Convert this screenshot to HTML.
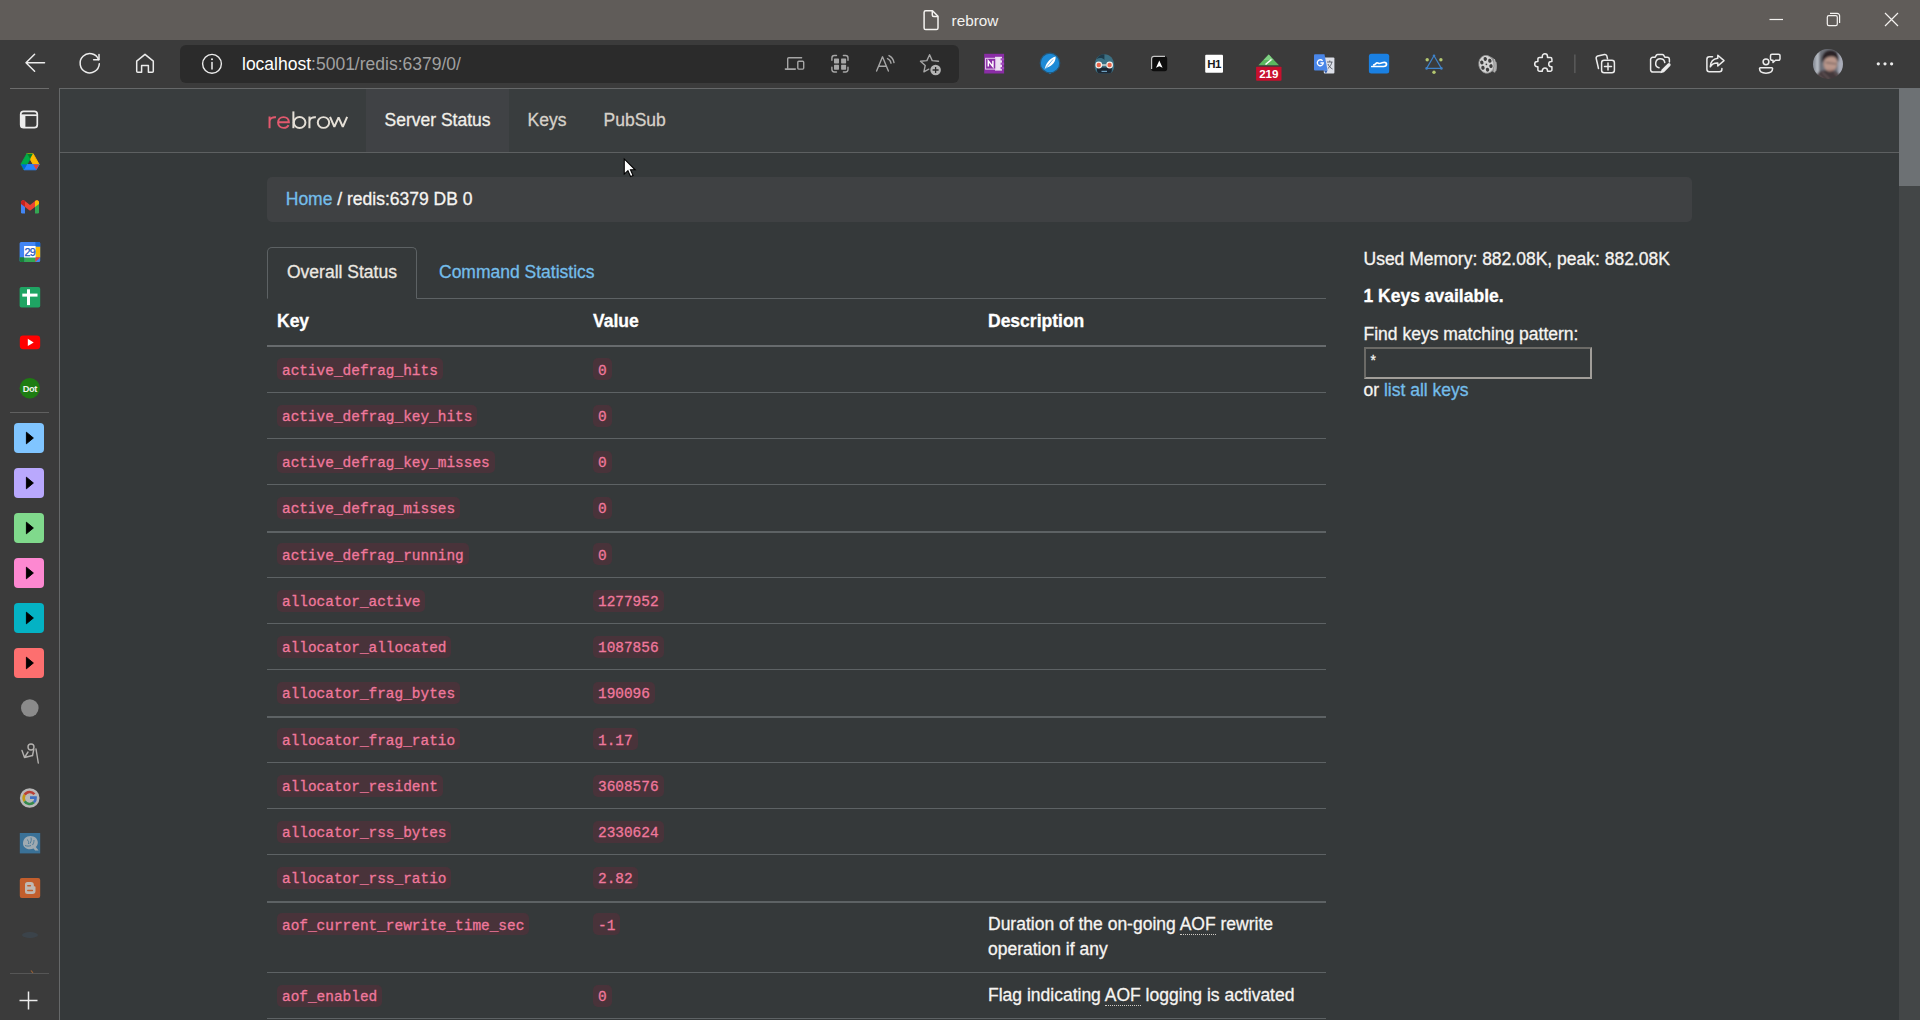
<!DOCTYPE html>
<html>
<head>
<meta charset="utf-8">
<title>rebrow</title>
<style>
*{box-sizing:border-box;margin:0;padding:0}
html,body{width:1920px;height:1020px;overflow:hidden;background:#3b3b3b;font-family:"Liberation Sans",sans-serif;}
.abs{position:absolute}
/* ---------- browser chrome ---------- */
#titlebar{position:absolute;left:0;top:0;width:1920px;height:40px;background:#605c59}
#titlebar .ttl{position:absolute;left:951.600px;top:11px;font-size:15.300px;line-height:20px;color:#f4f2f0}
#toolbar{position:absolute;left:0;top:40px;width:1920px;height:48px;background:#3b3b3b}
#addr{position:absolute;left:180px;top:5px;width:779px;height:38px;border-radius:6px;background:#2b2b2b}
#addr .url{position:absolute;left:62px;top:7.500px;font-size:17.5px;line-height:22px;color:#a0a0a0;white-space:nowrap}
#addr .url b{font-weight:normal;color:#ffffff}
#topline{position:absolute;left:59px;top:88px;width:1840px;height:1px;background:#666869}
#sideline{position:absolute;left:59px;top:88px;width:1px;height:932px;background:#666869}
#sidebar{position:absolute;left:0;top:88px;width:59px;height:932px;background:#3b3b3b}
.sbsep{position:absolute;left:10px;width:39px;height:1px;background:#5e5e5e}
/* ---------- scrollbar ---------- */
#sbtrack{position:absolute;left:1899px;top:89px;width:21px;height:931px;background:#434647}
#sbthumb{position:absolute;left:1899px;top:88px;width:21px;height:98px;background:#6d7174}
/* ---------- page ---------- */
#page{position:absolute;left:60px;top:89px;width:1839px;height:931px;background:#35393a;overflow:hidden;color:#f6f4f1;font-size:17.5px;line-height:25px;-webkit-text-stroke:0.3px}
#nav{position:absolute;left:0;top:0;width:1839px;height:64px;background:#393d3e;border-bottom:1px solid #5d6061}
#nav .act{position:absolute;left:306px;top:0;width:143px;height:63px;background:#404245}
#nav .it{position:absolute;top:19px;font-size:17.5px;line-height:25px;color:#d6d1c9;white-space:nowrap}
#bc{position:absolute;left:207px;top:88.4px;width:1425px;height:45px;border-radius:5px;background:#3f4143;padding:10px 18.75px;white-space:nowrap}
a,.lnk{color:#74bdea;text-decoration:none}
#tabs{position:absolute;left:207px;top:158px;width:1059px;height:52px;border-bottom:1px solid #5d6264}
#tabs .t1{position:absolute;left:0;top:0;width:150px;height:52px;border:1px solid #5d6264;border-bottom:1px solid #35393a;border-radius:5px 5px 0 0;padding:12px 0 0 19px;color:#ece8e1}
#tabs .t2{position:absolute;left:172px;top:13px;}
#tbl{position:absolute;left:207px;top:210.900px;width:1059px}
.hd{position:relative;height:47px;border-bottom:2px solid #676b6d;font-weight:bold;color:#fff}
.hd span{position:absolute;top:9px}
.r{position:relative;height:46.25px;border-top:1px solid #5d6264}
.r.first{border-top:0;height:45px}
.r.first .k,.r.first .v{top:10.600px}
.r.thick{border-top-width:2px;height:46.25px}
.r.thick .k,.r.thick .v{top:9.750px}
.r.thick .d{top:9.400px}
.r.tall{height:71.25px !important}
.k,.v,.d{position:absolute;top:10.750px;white-space:nowrap}
.k{left:10px}.v{left:326px}.d{left:721px;white-space:normal;width:330px;top:10.400px}
code{font-family:"Liberation Mono",monospace;font-size:14.43px;line-height:20px;height:22px;display:inline-block;padding:2.450px 5px 0 5px;margin-top:0.900px;border-radius:5px;background:#49333a;color:#f0789c;vertical-align:top}
abbr{text-decoration:none;border-bottom:1px dotted #cfcbc5}
#side{position:absolute;left:1303.5px;top:0;width:330px;white-space:nowrap}
#side .sl{position:absolute;left:0;height:25px;line-height:25px}
#side .inp{position:absolute;left:0.5px;top:258px;width:228px;height:32px;border:2px solid #a19e99;border-top-color:#6b6a66;border-left-color:#6b6a66;background:#35393a;padding:2px 0 0 4.400px;font-size:13.800px;line-height:19px;color:#f6f4f1}
</style>
</head>
<body>
<!-- PAGE -->
<div id="page">
  <div id="nav">
    <div class="act"></div>
    <svg class="abs" style="left:205px;top:18px" width="95" height="26" viewBox="0 0 90 26" preserveAspectRatio="none" fill="none" stroke-width="1.9" stroke-linecap="butt">
      <g stroke="#e2596e">
        <path d="M4.3 9.6V21.2M4.3 14.2C4.6 11.2 7.2 9.9 10.4 10.3"/>
        <path d="M12.6 15.3H22.6C22.6 11.9 20.4 10.1 17.6 10.1C14.5 10.1 12.4 12.5 12.4 15.5C12.4 18.6 14.6 20.9 17.7 20.9C19.8 20.9 21.5 19.8 22.3 18.1"/>
      </g>
      <g stroke="#e4dfd6">
        <path d="M26.9 4.4V21.2"/>
        <circle cx="32.8" cy="15.5" r="5.5"/>
        <path d="M42.1 9.6V21.2M42.1 14.2C42.4 11.2 45 9.9 48.2 10.3"/>
        <circle cx="55.4" cy="15.5" r="5.4"/>
        <path d="M61.6 9.9L65.7 19.800L69.7 10.4L73.7 19.800L77.8 9.9" stroke-linejoin="bevel"/>
      </g>
    </svg>
    <div class="it" style="left:324.5px;color:#f1efe9">Server Status</div>
    <div class="it" style="left:467.5px">Keys</div>
    <div class="it" style="left:543.5px">PubSub</div>
  </div>
  <div id="bc"><span class="lnk">Home</span> / redis:6379 DB 0</div>
  <div id="tabs"><div class="t1">Overall Status</div><div class="t2 lnk">Command Statistics</div></div>
  <div id="tbl">
    <div class="hd"><span style="left:10px">Key</span><span style="left:326px">Value</span><span style="left:721px">Description</span></div>
    <div class="r first"><div class="k"><code>active_defrag_hits</code></div><div class="v"><code>0</code></div></div>
    <div class="r"><div class="k"><code>active_defrag_key_hits</code></div><div class="v"><code>0</code></div></div>
    <div class="r"><div class="k"><code>active_defrag_key_misses</code></div><div class="v"><code>0</code></div></div>
    <div class="r"><div class="k"><code>active_defrag_misses</code></div><div class="v"><code>0</code></div></div>
    <div class="r thick"><div class="k"><code>active_defrag_running</code></div><div class="v"><code>0</code></div></div>
    <div class="r"><div class="k"><code>allocator_active</code></div><div class="v"><code>1277952</code></div></div>
    <div class="r"><div class="k"><code>allocator_allocated</code></div><div class="v"><code>1087856</code></div></div>
    <div class="r"><div class="k"><code>allocator_frag_bytes</code></div><div class="v"><code>190096</code></div></div>
    <div class="r thick"><div class="k"><code>allocator_frag_ratio</code></div><div class="v"><code>1.17</code></div></div>
    <div class="r"><div class="k"><code>allocator_resident</code></div><div class="v"><code>3608576</code></div></div>
    <div class="r"><div class="k"><code>allocator_rss_bytes</code></div><div class="v"><code>2330624</code></div></div>
    <div class="r"><div class="k"><code>allocator_rss_ratio</code></div><div class="v"><code>2.82</code></div></div>
    <div class="r tall thick"><div class="k"><code>aof_current_rewrite_time_sec</code></div><div class="v"><code>-1</code></div><div class="d">Duration of the on-going <abbr>AOF</abbr> rewrite operation if any</div></div>
    <div class="r"><div class="k"><code>aof_enabled</code></div><div class="v"><code>0</code></div><div class="d">Flag indicating <abbr>AOF</abbr> logging is activated</div></div>
    <div class="r"></div>
  </div>
  <div id="side">
    <div class="sl" style="top:158.43px">Used Memory: 882.08K, peak: 882.08K</div>
    <div class="sl" style="top:195.43px;font-weight:bold;color:#fff">1 Keys available.</div>
    <div class="sl" style="top:233.43px">Find keys matching pattern:</div>
    <div class="inp">*</div>
    <div class="sl" style="top:289.43px">or <span class="lnk">list all keys</span></div>
  </div>
</div>
<div id="sbtrack"></div><div id="sbthumb"></div>

<!-- CHROME -->
<div id="titlebar"><svg width="1920" height="40" viewBox="0 0 1920 40" style="position:absolute;left:0;top:0" fill="none">
  <!-- file icon -->
  <path d="M925.7 10.8H932.5L938 16.3V28a1.6 1.6 0 0 1-1.6 1.6H925.7a1.6 1.6 0 0 1-1.6-1.6V12.4a1.6 1.6 0 0 1 1.6-1.6Z" stroke="#f4f2f0" stroke-width="1.5" stroke-linejoin="round"/>
  <path d="M932.3 11V15a1.5 1.5 0 0 0 1.5 1.5H938" stroke="#f4f2f0" stroke-width="1.5"/>
  <!-- window controls -->
  <path d="M1769.5 19.5H1783" stroke="#f4f2f0" stroke-width="1.2"/>
  <rect x="1827.3" y="15.6" width="10" height="10" rx="1.6" stroke="#f4f2f0" stroke-width="1.2"/>
  <path d="M1830 13.4H1837.2a2.4 2.4 0 0 1 2.4 2.4V23" stroke="#f4f2f0" stroke-width="1.2"/>
  <path d="M1885 13L1898 26M1898 13L1885 26" stroke="#f4f2f0" stroke-width="1.2"/>
</svg><div class="ttl">rebrow</div></div>
<div id="toolbar">
  <div id="addr"><div class="url"><b>localhost</b>:5001/redis:6379/0/</div></div>
<svg width="1920" height="48" viewBox="0 40 1920 48" style="position:absolute;left:0;top:0" fill="none">
  <g stroke="#ececec" stroke-width="1.5" stroke-linecap="round" stroke-linejoin="round">
    <!-- back -->
    <path d="M44.5 62.7H26M34.6 54.3L26 62.7L34.6 71.2"/>
    <!-- refresh -->
    <path d="M98.6 59.6A9.6 9.6 0 1 0 99.3 63.7"/>
    <path d="M99 54.6V59.8H93.6"/>
    <!-- home -->
    <path d="M136.7 61.2L145 54.3L153.3 61.2V71.2a1 1 0 0 1-1 1H148.4V65.4H141.6V72.2H137.7a1 1 0 0 1-1-1Z"/>
  </g>
  <!-- info -->
  <circle cx="212" cy="63.8" r="9.4" stroke="#ececec" stroke-width="1.4"/>
  <path d="M212 62.4V69" stroke="#ececec" stroke-width="1.5" stroke-linecap="round"/>
  <circle cx="212" cy="59.2" r="1" fill="#ececec"/>
  <!-- addr icons -->
  <g stroke="#a6a6a6" stroke-width="1.4" stroke-linecap="round" stroke-linejoin="round">
    <path d="M787.7 68.3V58.8a1 1 0 0 1 1-1H801.6"/>
    <path d="M785.4 69.1H795.3" stroke-width="1.6"/>
    <rect x="797.8" y="61.2" width="5.9" height="7.9" rx="1"/>
    <!-- grid -->
    <path d="M836.5 55.5H834.3a2.4 2.4 0 0 0-2.4 2.4V60.2M843.4 55.5H845.6a2.4 2.4 0 0 1 2.4 2.4V60.2M831.9 67.3V69.6a2.4 2.4 0 0 0 2.4 2.4H836.5M848 67.3V69.6a2.4 2.4 0 0 1-2.4 2.4H843.4"/>
    <!-- A -->
    <path d="M876.6 71L882.5 56.8L888.4 71M878.7 66.2H886.3"/>
    <path d="M887.5 58.6A6 6 0 0 1 891 63.2M889 55.6A9.5 9.5 0 0 1 894 62.6"/>
    <!-- star -->
    <path d="M929.6 54.8L932.2 60.6L938.5 61.2M929.6 54.8L926.9 60.6L920.5 61.3L925.2 65.6L923.9 71.9L928.8 69.2"/>
  </g>
  <g fill="#a6a6a6">
    <rect x="834" y="58.5" width="5" height="4.9" rx=".6"/><rect x="841.1" y="58.5" width="5" height="4.9" rx=".6"/>
    <rect x="834" y="64.8" width="5" height="4.9" rx=".6"/><rect x="841.1" y="64.8" width="5" height="4.9" rx=".6"/>
    <circle cx="935.6" cy="70" r="5.3" fill="#b4b4b4"/>
  </g>
  <path d="M932.6 70H938.6M935.6 67V73" stroke="#2b2b2b" stroke-width="1.3"/>

  <!-- onenote -->
  <g>
    <rect x="984.2" y="53.800" width="19.900" height="19.700" fill="#8a2da6"/>
    <rect x="995" y="56.800" width="7" height="13.800" fill="#ecdff2"/>
    <rect x="1000.600" y="58.200" width="3.500" height="2.200" fill="#a04cbc"/><rect x="1000.600" y="62.600" width="3.500" height="2.200" fill="#a04cbc"/><rect x="1000.600" y="67" width="3.500" height="2.200" fill="#a04cbc"/>
    <rect x="985.600" y="58.300" width="10.200" height="10.800" fill="#8a2da6" stroke="#e6d2ee" stroke-width="1"/>
    <path d="M988.300 66.600V60.800L992.900 66.600V60.800" stroke="#ffffff" stroke-width="1.500" stroke-linejoin="miter"/>
  </g>
  <!-- feather -->
  <g>
    <circle cx="1050" cy="63" r="9.8" fill="#1d8ad6"/>
    <path d="M1046.500 71L1050 74.200L1053.500 71Z" fill="#1d8ad6"/>
    <circle cx="1050" cy="63" r="9.800" stroke="#24577a" stroke-width="1.200" fill="none"/>
    <path d="M1044.6 69.5C1045.6 63.5 1049.6 58 1055.6 56.4C1056 61 1052.5 66 1047.2 67.4Z" fill="#ffffff"/>
    <path d="M1044.6 69.5L1053 59.5" stroke="#1d8ad6" stroke-width=".6"/>
  </g>
  <!-- spy -->
  <g>
    <path d="M1094.6 66C1094.6 58.6 1099 54.2 1104.4 54.2C1109.800 54.2 1114.2 58.6 1114.2 66C1114.2 70.5 1111.500 73.5 1109 73.5H1099.8C1097.3 73.5 1094.6 70.5 1094.6 66Z" fill="#3b7084"/>
    <path d="M1097 67.5H1111.8V70.500C1111.8 72.3 1110.3 73.5 1108.800 73.5H1100C1098.5 73.5 1097 72.3 1097 70.500Z" fill="#1c2733"/>
    <path d="M1104.4 54.200C1101 54.200 1098.300 56 1096.500 59.200C1099.500 57.500 1102.500 57.800 1104.400 60Z" fill="#1f3b4a"/>
    <circle cx="1098.800" cy="65" r="2.800" fill="#e8644a" stroke="#f4f0ea" stroke-width="1.200"/>
    <circle cx="1109.600" cy="65" r="2.800" fill="#e8644a" stroke="#f4f0ea" stroke-width="1.200"/>
    <path d="M1102 65H1106" stroke="#f4f0ea" stroke-width="1.2"/>
    <rect x="1101.5" y="70.800" width="5.500" height="1.200" fill="#6fa0c0"/>
  </g>
  <!-- black arrow -->
  <g>
    <rect x="1151.2" y="56.200" width="16" height="15" rx="2.600" fill="#0d0d0d"/>
    <path d="M1151.600 69V58.800a2.400 2.400 0 0 1 2.400-2.400H1165" stroke="#c4c4c4" stroke-width="1.200"/>
    <path d="M1159.300 60.600L1162.600 67.800L1159.300 66.300L1156 67.800Z" fill="#ffffff"/>
  </g>
  <!-- H1 -->
  <g>
    <rect x="1205.2" y="54.800" width="17.800" height="17.900" rx="1" fill="#ffffff"/>
    <text x="1214.1" y="68.200" font-family="Liberation Sans, sans-serif" font-size="11.500" font-weight="bold" fill="#1a1a1a" text-anchor="middle" letter-spacing="-0.600">H1</text>
  </g>
  <!-- green tri + 219 -->
  <g>
    <path d="M1268.700 54.600L1279 65.200H1258.400Z" fill="#5cb85f"/>
    <path d="M1268.700 54.600L1273.800 59.900H1263.600Z" fill="#7fd083"/>
    <path d="M1265.500 64.500L1271.500 59.500" stroke="#ffffff" stroke-width="1.600"/>
    <rect x="1256.100" y="66.800" width="25.400" height="14" rx=".800" fill="#c8102e"/>
    <text x="1268.800" y="78.100" font-family="Liberation Sans, sans-serif" font-size="11.600" font-weight="bold" fill="#ffffff" text-anchor="middle">219</text>
  </g>
  <!-- translate -->
  <g>
    <rect x="1323.800" y="57.500" width="10.600" height="16" rx="1" fill="#dcdfe8"/>
    <path d="M1327 62H1332.500M1329.800 60.500V62M1327.800 68.500C1330 67 1331.500 64.500 1331.800 62M1328 64C1329 66.500 1330.500 68 1332.500 69" stroke="#555a66" stroke-width=".9"/>
    <path d="M1314 55.200a1 1 0 0 1 1-1H1324.500L1327.500 70.400H1315a1 1 0 0 1-1-1Z" fill="#4a86e8"/>
    <path d="M1323.800 70.400L1327.500 70.400L1326 73.500Z" fill="#2d5bb0"/>
    <path d="M1322.600 60.800A3 3 0 1 0 1323.300 63H1320.500" stroke="#ffffff" stroke-width="1.300"/>
  </g>
  <!-- shoe -->
  <g>
    <rect x="1368.900" y="53.800" width="20.300" height="19.700" rx="2.500" fill="#1a80e2"/>
    <path d="M1371.800 66.500H1383.500C1385.500 66.500 1386.500 65.500 1386.500 64.300C1386.500 63 1385.500 62.300 1384.200 62.300C1382.800 62.300 1381.500 63.500 1379.500 63.500C1378.300 63.500 1377.500 62.800 1377 62.800C1376 62.800 1375.500 64.800 1373.800 64.800" stroke="#ffffff" stroke-width="1.700" stroke-linecap="round" stroke-linejoin="round"/>
  </g>
  <!-- triangle graph -->
  <g>
    <path d="M1434 55.800L1426.600 68.400H1441.400Z" stroke="#3f82c8" stroke-width="1.200" stroke-linejoin="round"/>
    <circle cx="1434" cy="55.700" r="1.300" fill="#3f82c8"/><circle cx="1426.600" cy="68.400" r="1.300" fill="#3f82c8"/><circle cx="1441.400" cy="68.400" r="1.300" fill="#3f82c8"/>
    <circle cx="1427.200" cy="59.800" r="1.700" fill="#b4c770"/><circle cx="1440.900" cy="59.800" r="1.700" fill="#b4c770"/><circle cx="1434" cy="72.300" r="1.700" fill="#b4c770"/>
  </g>
  <!-- film reel -->
  <g>
    <path d="M1489 56.500C1494 57 1497 61 1497 66C1497 69 1496 71.500 1495 72.800L1491.500 71Z" fill="#8a8a8a"/>
    <path d="M1494.300 59V72.300M1495.800 62V71" stroke="#d0d0d0" stroke-width=".700"/>
    <ellipse cx="1486.400" cy="64.300" rx="7.600" ry="9" fill="#d2d2d2" transform="rotate(-12 1486.400 64.300)"/>
    <ellipse cx="1486.400" cy="64.300" rx="7.600" ry="9" fill="none" stroke="#8e8e8e" stroke-width=".800" transform="rotate(-12 1486.400 64.300)"/>
    <g fill="#3e3e3e" transform="rotate(-12 1486.400 64.300)">
      <ellipse cx="1486.400" cy="58.800" rx="1.700" ry="2"/><ellipse cx="1486.400" cy="69.800" rx="1.700" ry="2"/>
      <ellipse cx="1482.300" cy="61.600" rx="1.700" ry="2"/><ellipse cx="1490.500" cy="61.600" rx="1.700" ry="2"/>
      <ellipse cx="1482.300" cy="67" rx="1.700" ry="2"/><ellipse cx="1490.500" cy="67" rx="1.700" ry="2"/>
      <circle cx="1486.400" cy="64.300" r=".900"/>
    </g>
  </g>
  <!-- puzzle -->
  <path d="M1542 58.300V57.300a2.600 2.600 0 0 1 5.200 0V58.300H1550a1.600 1.600 0 0 1 1.600 1.600V62.400H1551a2.600 2.600 0 0 0 0 5.200H1551.600V70.600a1.600 1.600 0 0 1-1.600 1.600H1547.200V71.600a2.600 2.600 0 0 0-5.200 0V72.200H1539.200a1.600 1.600 0 0 1-1.600-1.600V67.600H1537a2.600 2.600 0 0 1 0-5.200H1537.600V59.900a1.600 1.600 0 0 1 1.600-1.600Z" stroke="#ececec" stroke-width="1.500" stroke-linejoin="round" transform="translate(0.300,-0.900)"/>
  <rect x="1574.400" y="54.500" width="1" height="18.600" fill="#6a6a6a"/>
  <!-- collections -->
  <g stroke="#ececec" stroke-width="1.500" stroke-linejoin="round" stroke-linecap="round">
    <path d="M1598.500 68.500L1596.200 58.500a2 2 0 0 1 1.500-2.400L1604.500 54.600a2 2 0 0 1 2.400 1.500L1607.500 58.800"/>
    <rect x="1601.600" y="60.200" width="12.800" height="12.600" rx="2.500"/>
    <path d="M1604.500 66.500H1611.500M1608 63V70"/>
  </g>
  <!-- camera pen -->
  <g stroke="#ececec" stroke-width="1.500" stroke-linejoin="round" stroke-linecap="round">
    <path d="M1661 72H1652.800a2.200 2.200 0 0 1-2.200-2.200V59.500a2.200 2.200 0 0 1 2.200-2.200H1655L1656.500 55a1.500 1.500 0 0 1 1.200-.6H1662.300a1.500 1.500 0 0 1 1.200.6L1665 57.300H1667.200a2.200 2.200 0 0 1 2.200 2.200V62"/>
    <path d="M1664.800 62.500A4.600 4.600 0 1 0 1659 67.800"/>
  </g>
  <path d="M1660.500 73.300L1661.500 69.800L1667.800 63.500a1.700 1.700 0 0 1 2.400 2.400L1664 72.200Z" fill="#ececec"/>
  <!-- share -->
  <g stroke="#ececec" stroke-width="1.500" stroke-linejoin="round" stroke-linecap="round">
    <path d="M1712.500 56.800H1709.400a2.500 2.500 0 0 0-2.500 2.500V69.300a2.500 2.500 0 0 0 2.500 2.500H1719.400a2.500 2.500 0 0 0 2.500-2.500V68.500"/>
    <path d="M1717.800 55.200L1724 60.600L1717.800 66V63C1714 62.800 1711.800 64.200 1710.300 66.800C1710.500 62 1713 58.800 1717.800 58.300Z"/>
  </g>
  <!-- feedback -->
  <g stroke="#ececec" stroke-width="1.500" stroke-linejoin="round" stroke-linecap="round">
    <circle cx="1766" cy="61.800" r="2.900"/>
    <path d="M1760.300 67.800H1771.800a.8.800 0 0 1 .8.800C1772.600 71.500 1770 73.200 1766 73.200C1762 73.200 1759.500 71.500 1759.500 68.600a.8.800 0 0 1 .8-.8Z"/>
    <path d="M1772 54.200H1778.500a1.500 1.500 0 0 1 1.500 1.500V58.800a1.500 1.500 0 0 1-1.500 1.500H1775.500L1773 62.500V60.300H1772a1.500 1.500 0 0 1-1.500-1.500V55.700a1.500 1.500 0 0 1 1.500-1.500Z"/>
  </g>
  <!-- avatar -->
  <defs>
    <clipPath id="avc"><circle cx="1828" cy="64" r="15"/></clipPath>
    <filter id="avb" x="-10%" y="-10%" width="120%" height="120%"><feGaussianBlur stdDeviation="0.9"/></filter>
  </defs>
  <g clip-path="url(#avc)">
    <g filter="url(#avb)">
      <rect x="1811" y="47" width="34" height="34" fill="#6f727a"/>
      <rect x="1811" y="47" width="8" height="34" fill="#8d939c"/>
      <rect x="1816" y="47" width="3" height="34" fill="#b9bec6"/>
      <rect x="1838" y="47" width="7" height="34" fill="#a9acb8"/>
      <path d="M1815 81C1815 73 1820 70 1828 70C1836 70 1841 73 1842 81Z" fill="#43383b"/>
      <path d="M1818 74L1824 80M1822 72L1830 80M1834 72L1840 78" stroke="#77666a" stroke-width="1"/>
      <ellipse cx="1830.500" cy="63.500" rx="6.800" ry="8" fill="#b9968a" transform="rotate(12 1830.500 63.500)"/>
      <path d="M1822 63C1820.500 55 1825 49.500 1831 50C1837 50.500 1840 55 1838.500 62C1837 57.500 1834 56 1830.500 56.500C1826.500 57 1824 59 1822 63Z" fill="#2b2326"/>
      <path d="M1825.500 62.500L1836.500 64" stroke="#5d4d4c" stroke-width="1"/>
      <path d="M1828 69.500C1830 70.500 1832 70.500 1834 69.500" stroke="#8a5f5a" stroke-width=".8" fill="none"/>
    </g>
  </g>
  <!-- dots -->
  <circle cx="1878.300" cy="63.800" r="1.600" fill="#ececec"/><circle cx="1885" cy="63.800" r="1.600" fill="#ececec"/><circle cx="1891.600" cy="63.800" r="1.600" fill="#ececec"/>
</svg>
</div>
<div id="sidebar">
<svg width="59" height="932" viewBox="0 88 59 932" style="position:absolute;left:0;top:0">
  <rect x="10" y="88" width="39" height="1" fill="#6c6c6c"/>
  <!-- tab actions -->
  <g>
    <rect x="20.7" y="111.3" width="16.6" height="16.4" rx="3" fill="none" stroke="#ececec" stroke-width="1.7"/>
    <path d="M20.7 115.2H37.3" stroke="#ececec" stroke-width="1.7"/>
    <path d="M20.7 115.2H25.4V127.7H23.7a3 3 0 0 1-3-3Z" fill="#ececec"/>
  </g>
  <!-- drive -->
  <g>
    <path d="M27 153.5H33L39.2 164.5H33.2Z" fill="#ffba00" stroke="#ffba00" stroke-width=".9" stroke-linejoin="round"/>
    <path d="M27 153.5L21 164.2L24 169.8L30 159Z" fill="#00ac47" stroke="#00ac47" stroke-width=".9" stroke-linejoin="round"/>
    <path d="M27 153.5H33L30 159Z" fill="#00832d"/>
    <path d="M24 169.8H36.2L39.2 164.5H27Z" fill="#2684fc" stroke="#2684fc" stroke-width=".9" stroke-linejoin="round"/>
    <path d="M33.2 164.5H39.2L36.2 169.8Z" fill="#ea4335"/>
    <path d="M21 164.2L24 169.8L27 164.5Z" fill="#0066da"/>
  </g>
  <!-- gmail -->
  <g>
    <path d="M21 202.2a2 2 0 0 1 3.2-1.6L30 205l5.8-4.4a2 2 0 0 1 3.2 1.6V204L30 210.8L21 204Z" fill="#ea4335"/>
    <path d="M21 202.5V212.3a1.2 1.2 0 0 0 1.2 1.2H25V205.5Z" fill="#4285f4"/>
    <path d="M39 202.5V212.3a1.2 1.2 0 0 1-1.2 1.2H35V205.5Z" fill="#34a853"/>
    <path d="M35 201.3l.8-.7a2 2 0 0 1 3.2 1.6V204L35 207Z" fill="#fbbc04"/>
    <path d="M25 201.3l-.8-.7a2 2 0 0 0-3.2 1.6V204L25 207Z" fill="#c5221f"/>
  </g>
  <!-- calendar -->
  <g>
    <rect x="19.6" y="242" width="20.6" height="20" rx="1.5" fill="#4285f4"/>
    <rect x="35.4" y="246.6" width="4.8" height="10.8" fill="#fbbc04"/>
    <rect x="24.3" y="257.3" width="11.2" height="4.7" fill="#34a853"/>
    <path d="M19.6 257.3H24.3V262H21.1a1.5 1.5 0 0 1-1.5-1.5Z" fill="#188038"/>
    <path d="M35.4 257.3H40.2L35.4 262Z" fill="#ea4335"/>
    <path d="M35.4 242H38.7a1.5 1.5 0 0 1 1.5 1.5V246.6H35.4Z" fill="#1967d2"/>
    <rect x="24.1" y="246" width="11.5" height="11.500" fill="#ffffff"/>
    <text x="29.8" y="255.700" font-family="Liberation Sans, sans-serif" font-size="10.800" fill="#1b55c4" stroke="#1b55c4" stroke-width=".25" text-anchor="middle" letter-spacing="-0.700">29</text>
  </g>
  <!-- sheets -->
  <g>
    <rect x="19.6" y="287" width="20.6" height="20.6" rx="1.8" fill="#1fa463"/>
    <rect x="27" y="289.3" width="3" height="15.8" fill="#ffffff"/>
    <rect x="22.3" y="293.6" width="15.2" height="3" fill="#ffffff"/>
  </g>
  <!-- youtube -->
  <g>
    <rect x="19.8" y="335.6" width="20.4" height="13.6" rx="3.4" fill="#ff0000"/>
    <path d="M27.8 338.8V346L33.7 342.4Z" fill="#ffffff"/>
  </g>
  <!-- dot -->
  <g>
    <circle cx="29.8" cy="388.2" r="10.2" fill="#1e7c12"/>
    <text x="29.9" y="391.6" font-family="Liberation Sans, sans-serif" font-size="9.2" font-weight="bold" fill="#f0f4ee" text-anchor="middle" letter-spacing="-0.3">Dot</text>
  </g>
  <rect x="10" y="412" width="39" height="1" fill="#606060"/>
  <!-- play squares -->
  <g>
    <rect x="14" y="423" width="30" height="30" rx="4" fill="#80c5ff"/><path d="M26.400 432.2V443.8L33.400 438.0Z" fill="#000" stroke="#000" stroke-width=".9" stroke-linejoin="round"/>
    <rect x="14" y="468" width="30" height="30" rx="4" fill="#b9a8fd"/><path d="M26.400 477.2V488.8L33.400 483.0Z" fill="#000" stroke="#000" stroke-width=".9" stroke-linejoin="round"/>
    <rect x="14" y="513" width="30" height="30" rx="4" fill="#80d98c"/><path d="M26.400 522.2V533.8L33.400 528.0Z" fill="#000" stroke="#000" stroke-width=".9" stroke-linejoin="round"/>
    <rect x="14" y="558" width="30" height="30" rx="4" fill="#fd88d1"/><path d="M26.400 567.2V578.8L33.400 573.0Z" fill="#000" stroke="#000" stroke-width=".9" stroke-linejoin="round"/>
    <rect x="14" y="603" width="30" height="30" rx="4" fill="#04b2c4"/><path d="M26.400 612.2V623.8L33.400 618.0Z" fill="#000" stroke="#000" stroke-width=".9" stroke-linejoin="round"/>
    <rect x="14" y="648" width="30" height="30" rx="4" fill="#fd6f6f"/><path d="M26.400 657.2V668.8L33.400 663.0Z" fill="#000" stroke="#000" stroke-width=".9" stroke-linejoin="round"/>
  </g>
  <circle cx="29.8" cy="708" r="8.8" fill="#8b8b8b"/>
  <!-- glyph -->
  <g fill="none" stroke="#b3b1af" stroke-width="1.4" stroke-linecap="round" stroke-linejoin="round">
    <circle cx="31" cy="747" r="3"/>
    <path d="M22 750.5L24.5 757.5L32.5 755.5M28 752L24.5 757.5"/>
    <path d="M36 749L38.3 763"/>
    <path d="M33.8 749.5L32.5 755.5"/>
  </g>
  <!-- google G -->
  <g opacity="0.72">
    <circle cx="29.7" cy="798" r="9.8" fill="#e8e8e8"/>
    <g fill="none" stroke-width="2.6">
      <path d="M34.4 794.2A6 6 0 0 0 24.6 794.8" stroke="#ea4335"/>
      <path d="M24.6 794.8A6 6 0 0 0 24.6 801.2" stroke="#fbbc05"/>
      <path d="M24.6 801.2A6 6 0 0 0 33.9 802.3" stroke="#34a853"/>
      <path d="M33.9 802.3A6 6 0 0 0 35.6 797.6H30" stroke="#4285f4"/>
    </g>
  </g>
  <!-- brain square -->
  <g opacity="0.8">
    <rect x="19.8" y="833" width="20.4" height="20.4" fill="#3a7fae"/>
    <path d="M23 843.5c0-4.5 3-7.5 7.5-7.5c4 0 7.3 2.8 7.3 6.5c0 2.3-1 3.6-2 4.6l2.8 3.4h-3.5l-1.5-2c-1 .5-2.3.8-3.6.8c-2.3 0-4-.6-5-1.8c-1.3-1-2-2.4-2-4z" fill="#b9c6cf"/>
    <path d="M27 839.5c1.5 1 2 2.5 1.5 4.5M31 837.5c.5 2 .3 4 -1 6M34 840c0 2 -.5 3.5 -1.5 5M25 845.5c2 .8 4 .8 6 0" stroke="#4a86ad" stroke-width="0.9" fill="none"/>
  </g>
  <!-- blogger -->
  <g opacity="0.78">
    <rect x="19.8" y="878" width="20.4" height="20" rx="2" fill="#e8692a"/>
    <path d="M25 884.5a2.5 2.5 0 0 1 2.5-2.5h3.2a3.2 3.2 0 0 1 3.2 3.2v1h.6a1 1 0 0 1 1 1v3.800000000000001a3 3 0 0 1-3 3h-5a2.5 2.5 0 0 1-2.500000000000001-2.5Z" fill="#e4ddd6"/>
    <path d="M27.8 885.8h2.6M27.8 890.6h4.6" stroke="#e8692a" stroke-width="1.5" stroke-linecap="round"/>
  </g>
  <!-- faint -->
  <ellipse cx="30" cy="935" rx="8" ry="3" fill="#3d4a57" opacity="0.55"/>
  <rect x="10" y="973" width="39" height="1" fill="#565656"/>
  <path d="M31 970.5l2 2.5" stroke="#9a6034" stroke-width="1.2"/>
  <!-- plus -->
  <path d="M19.5 1000.5H37.5M28.5 991.5V1009.5" stroke="#ececec" stroke-width="1.5"/>
</svg>
</div>
<div id="topline"></div><div id="sideline"></div>
<svg style="position:absolute;left:622.300px;top:157px" width="16.200" height="21.600" viewBox="0 0 18 24"><path d="M2.500 2.200V19L6.600 15.200L9.600 21.800L12.300 20.600L9.400 14.200H14.600Z" fill="#ffffff" stroke="#000000" stroke-width="1.200" stroke-linejoin="miter"/></svg>
</body>
</html>
